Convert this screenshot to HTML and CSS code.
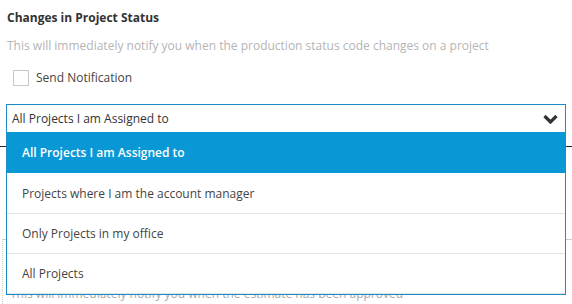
FILE: index.html
```html
<!DOCTYPE html>
<html>
<head>
<meta charset="utf-8">
<link rel="stylesheet" href="styles.css">
</head>
<body>
<div class="page">
  <section class="block">
    <h3 class="title">Changes in Project Status</h3>
    <p class="desc">This will immediately notify you when the production status code changes on a project</p>
    <label class="check-row"><span class="box"></span><span>Send Notification</span></label>
    <div class="select-wrap">
      <div class="select">
        <span>All Projects I am Assigned to</span>
        <svg class="chev" width="15" height="10" viewBox="0 0 15 10"><path d="M1.5 2 L7.5 8 L13.5 2" fill="none" stroke="#333" stroke-width="3.2" stroke-linejoin="miter"/></svg>
      </div>
      <ul class="menu">
        <li class="item active">All Projects I am Assigned to</li>
        <li class="item">Projects where I am the account manager</li>
        <li class="item">Only Projects in my office</li>
        <li class="item">All Projects</li>
      </ul>
    </div>
  </section>
  <section class="next">
    <div class="rule"></div>
    <div class="next-body">
      <div class="gray-rule"></div>
      <p class="desc2">This will immediately notify you when the estimate has been approved</p>
    </div>
  </section>
</div>
</body>
</html>
```
FILE: styles.css
```css
* { box-sizing: border-box; }
html, body { margin: 0; padding: 0; background: #fff; overflow: hidden; }
body { font-family: "Open Sans", "Noto Sans", sans-serif; color: #333; width: 572px; height: 304px; }
.page { position: relative; height: 304px; overflow: hidden; }
.block { padding: 9px 6px 0 6px; }
.title { margin: 0 0 0 1px; font-size: 12px; font-weight: 700; line-height: 17px; color: #333; }
.desc { margin: 11px 0 0 1px; font-size: 12px; line-height: 17px; color: #b5b5b5; }
.check-row { display: flex; align-items: center; gap: 7px; margin: 15px 0 0 7px; font-size: 12px; color: #444; line-height: 17px; }
.box { width: 16px; height: 16px; border: 1px solid #c8c8c8; background: #fff; margin-top: 1px; }
.select-wrap { position: relative; margin-top: 18px; z-index: 2; }
.select { height: 28px; border: 1px solid #1a8cc8; border-bottom: none; display: flex; align-items: center; justify-content: space-between; padding: 0 7px 0 5px; font-size: 12px; color: #333; background: #fff; }
.menu { position: absolute; left: 0; right: 0; top: 28px; margin: 0; padding: 0; list-style: none; background: #fff; border: 1px solid #1a8cc8; border-top: none; }
.item { height: 40px; display: flex; align-items: center; padding-left: 15px; font-size: 12px; color: #444; border-top: 1px solid #e2e2e2; }
.item.active { background: #0a97d5; color: #fff; font-weight: 600; border-top: none; height: 41px; }
.item.active + .item { border-top: none; }
.item:last-child { border-bottom: 1px solid #e2e2e2; height: 41px; }
.next { margin-top: 14px; }
.rule { height: 1px; background: #222; }
.next-body { margin-left: 2px; border-left: 1px dotted #ccc; height: 155px; }
.gray-rule { height: 1px; background: #ccc; margin-top: 92px; }
.desc2 { margin: 45px 0 0 7px; font-size: 12px; line-height: 17px; color: #aaa; }
```
